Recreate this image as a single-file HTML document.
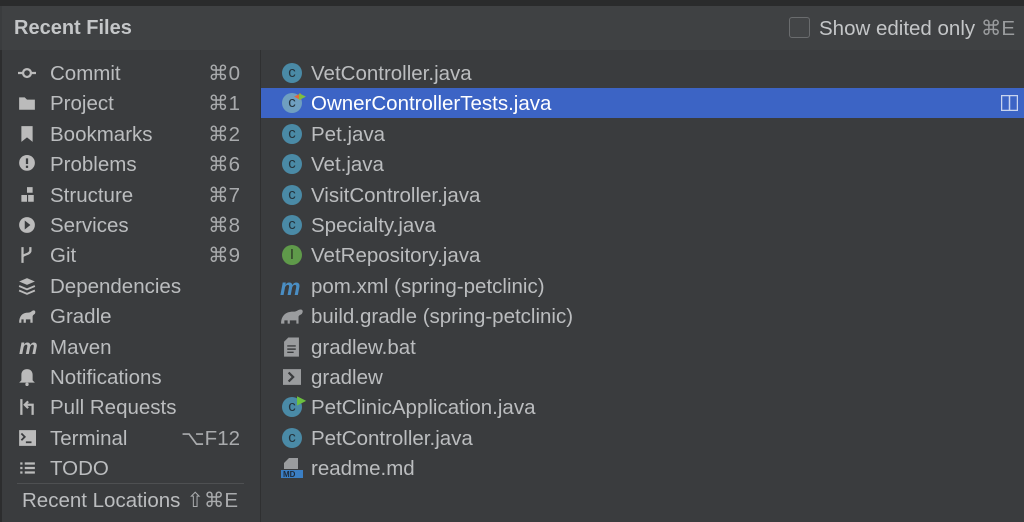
<html><head><style>
body{margin:0;width:1024px;height:522px;background:#3a3c3e;font-family:"Liberation Sans",sans-serif;overflow:hidden;position:relative;color:#bbbdbf}
.top{position:absolute;left:0;top:0;width:1024px;height:6px;background:#2a2b2c}
.hdr{position:absolute;left:2px;top:6px;width:1022px;height:44px;background:#3f4143}
.hdr .t{position:absolute;left:12px;top:11px;font-size:20px;font-weight:bold;color:#c4c6c8}
.cb{position:absolute;left:787px;top:11px;width:19px;height:19px;border:1px solid #6a6c6e;border-radius:3px;background:#434547}
.se{position:absolute;left:817px;top:10px;font-size:20.5px;color:#c4c6c8}
.se span{color:#9a9c9e}
.lb{position:absolute;left:0;top:50px;width:2px;height:472px;background:#2c2d2e}
.div{position:absolute;left:260px;top:50px;width:1px;height:472px;background:#2f3031}
.row{position:absolute;height:30px;line-height:32px;font-size:20.5px;white-space:nowrap}
.l{left:18px;width:222px}
.l .k{position:absolute;right:0;top:0;color:#a9abad}
.l .tx{position:absolute;left:32px}
.ic{position:absolute;top:6px;width:18px;height:18px}
.r .tx{position:absolute;left:50px}
.sel{position:absolute;left:261px;top:88px;width:763px;height:30px;background:#3c64c5}
.c{position:absolute;left:21px;top:5px;width:20px;height:20px;border-radius:50%;background:#4a8aa6;color:#24333c;font-size:15px;line-height:19px;text-align:center}
.sep{position:absolute;left:17px;top:483px;width:227px;height:1px;background:#4e5052}
</style></head><body>
<div class="top"></div>
<div class="hdr"><div class="t">Recent Files</div><div class="cb"></div><div class="se">Show edited only <span>⌘E</span></div></div>
<div class="lb"></div><div class="div"></div>
<div class="sel"></div>
<svg style="position:absolute;left:1001px;top:95px" width="17" height="16"><rect x="0.5" y="0.5" width="16" height="15" fill="none" stroke="#c8d4ee" stroke-width="1.5"/><line x1="8.5" y1="0" x2="8.5" y2="16" stroke="#c8d4ee" stroke-width="1.5"/></svg>

<div class="row l" style="top:58px"><svg class="ic" viewBox="0 0 16 16"><circle cx="8" cy="8" r="3.5" fill="none" stroke="#bbb" stroke-width="2"/><rect x="0" y="7" width="4" height="2" fill="#bbb"/><rect x="12" y="7" width="4" height="2" fill="#bbb"/></svg><span class="tx">Commit</span><span class="k">⌘0</span></div>
<div class="row l" style="top:88px"><svg class="ic" viewBox="0 0 16 16"><path d="M1 3h5l2 2h7v9H1z" fill="#bbb"/></svg><span class="tx">Project</span><span class="k">⌘1</span></div>
<div class="row l" style="top:119px"><svg class="ic" viewBox="0 0 16 16"><path d="M3 1h10v14l-5-4-5 4z" fill="#bbb"/></svg><span class="tx">Bookmarks</span><span class="k">⌘2</span></div>
<div class="row l" style="top:149px"><svg class="ic" viewBox="0 0 16 16"><circle cx="8" cy="7" r="7" fill="#bbb"/><rect x="7" y="3" width="2" height="5" fill="#3a3c3e"/><rect x="7" y="9.5" width="2" height="2" fill="#3a3c3e"/></svg><span class="tx">Problems</span><span class="k">⌘6</span></div>
<div class="row l" style="top:180px"><svg class="ic" viewBox="0 0 16 16"><rect x="8" y="1" width="5" height="5" fill="#bbb"/><rect x="3" y="8" width="5" height="6" fill="#bbb"/><rect x="9" y="8" width="5" height="6" fill="#bbb"/></svg><span class="tx">Structure</span><span class="k">⌘7</span></div>
<div class="row l" style="top:210px"><svg class="ic" viewBox="0 0 16 16"><circle cx="8" cy="8" r="7" fill="#bbb"/><path d="M6 4l5 4-5 4z" fill="#3a3c3e"/></svg><span class="tx">Services</span><span class="k">⌘8</span></div>
<div class="row l" style="top:240px"><svg class="ic" viewBox="0 0 16 16"><path d="M4 1v14M4 10c0-3 7-2 7-6M11 1v4" stroke="#bbb" stroke-width="2" fill="none"/></svg><span class="tx">Git</span><span class="k">⌘9</span></div>
<div class="row l" style="top:271px"><svg class="ic" viewBox="0 0 16 16"><path d="M8 1l7 3-7 3-7-3z" fill="#bbb"/><path d="M1 8l7 3 7-3M1 12l7 3 7-3" stroke="#bbb" stroke-width="1.6" fill="none"/></svg><span class="tx">Dependencies</span></div>
<div class="row l" style="top:301px"><svg class="ic" viewBox="0 0 16 16"><path d="M1 14c0-6 3-9 8-9 3 0 3-2 5-2 1 0 2 1 1 3-1 1-2 1-2 3v5h-2v-3H7v3H5v-3H3v3z" fill="#bbb"/></svg><span class="tx">Gradle</span></div>
<div class="row l" style="top:332px"><span style="position:absolute;left:1px;font-style:italic;font-weight:bold;color:#bbb;font-size:21px">m</span><span class="tx">Maven</span></div>
<div class="row l" style="top:362px"><svg class="ic" viewBox="0 0 16 16"><path d="M8 1c3 0 5 2 5 5v5l2 2H1l2-2V6c0-3 2-5 5-5z" fill="#bbb"/><circle cx="8" cy="14.5" r="1.5" fill="#bbb"/></svg><span class="tx">Notifications</span></div>
<div class="row l" style="top:392px"><svg class="ic" viewBox="0 0 16 16"><rect x="2" y="1" width="2" height="14" fill="#bbb"/><path d="M13 15V6H7M9 3L6 6l3 3" stroke="#bbb" stroke-width="2" fill="none"/></svg><span class="tx">Pull Requests</span></div>
<div class="row l" style="top:423px"><svg class="ic" viewBox="0 0 16 16"><rect x="1" y="1" width="15" height="14" fill="#bbb"/><path d="M3 4l3 3-3 3" stroke="#3a3c3e" stroke-width="1.6" fill="none"/><rect x="7" y="11" width="5" height="1.6" fill="#3a3c3e"/></svg><span class="tx">Terminal</span><span class="k">⌥F12</span></div>
<div class="row l" style="top:453px"><svg class="ic" viewBox="0 0 16 16" fill="#bbb"><rect x="2" y="3" width="2" height="2"/><rect x="6" y="3" width="9" height="2"/><rect x="2" y="7" width="2" height="2"/><rect x="6" y="7" width="9" height="2"/><rect x="2" y="11" width="2" height="2"/><rect x="6" y="11" width="9" height="2"/></svg><span class="tx">TODO</span></div>
<div class="sep"></div>
<div class="row" style="left:22px;top:485px;width:216px">Recent Locations<span style="position:absolute;right:0;color:#a9abad">⇧⌘E</span></div>

<div class="row r" style="left:261px;top:58px"><div class="c">c</div><span class="tx">VetController.java</span></div>
<div class="row r" style="left:261px;top:88px;color:#fff"><div class="c" style="background:#6f9fc0">c</div><span style="position:absolute;left:33px;top:-8px;color:#e06c3c;font-size:9px">◀</span><span style="position:absolute;left:38px;top:-8px;color:#7fbf3f;font-size:9px">▶</span><span class="tx">OwnerControllerTests.java</span></div>
<div class="row r" style="left:261px;top:119px"><div class="c">c</div><span class="tx">Pet.java</span></div>
<div class="row r" style="left:261px;top:149px"><div class="c">c</div><span class="tx">Vet.java</span></div>
<div class="row r" style="left:261px;top:180px"><div class="c">c</div><span class="tx">VisitController.java</span></div>
<div class="row r" style="left:261px;top:210px"><div class="c">c</div><span class="tx">Specialty.java</span></div>
<div class="row r" style="left:261px;top:240px"><div class="c" style="background:#5f9a4a;color:#2d3a26">I</div><span class="tx">VetRepository.java</span></div>
<div class="row r" style="left:261px;top:271px"><span style="position:absolute;left:19px;font-style:italic;font-weight:bold;color:#4a8ec4;font-size:23px">m</span><span class="tx">pom.xml (spring-petclinic)</span></div>
<div class="row r" style="left:261px;top:301px"><svg class="ic" style="left:19px;width:24px" viewBox="0 0 22 16"><path d="M1 15c0-7 4-11 11-11 4 0 4-2 7-2 1 0 3 1 1 4-1 1-3 1-3 3v6h-2v-3H9v3H7v-3H4v3z" fill="#9a9c9e"/></svg><span class="tx">build.gradle (spring-petclinic)</span></div>
<div class="row r" style="left:261px;top:332px"><svg class="ic" style="left:22px;top:4px;width:17px;height:22px" viewBox="0 0 16 20"><path d="M5 1h10v18H1V5z" fill="#9a9c9e"/><path d="M4 9h8M4 12h8M4 15h6" stroke="#3a3c3e" stroke-width="1.4"/></svg><span class="tx">gradlew.bat</span></div>
<div class="row r" style="left:261px;top:362px"><svg class="ic" style="left:22px" viewBox="0 0 16 16"><rect x="0" y="1" width="16" height="14" fill="#9a9c9e"/><path d="M5 4l4 4-4 4" stroke="#3a3c3e" stroke-width="2" fill="none"/></svg><span class="tx">gradlew</span></div>
<div class="row r" style="left:261px;top:392px"><div class="c">c</div><span style="position:absolute;left:36px;top:-8px;color:#6cbf3f;font-size:12px">▶</span><span class="tx">PetClinicApplication.java</span></div>
<div class="row r" style="left:261px;top:423px"><div class="c">c</div><span class="tx">PetController.java</span></div>
<div class="row r" style="left:261px;top:453px"><svg class="ic" style="left:20px;top:4px;width:22px;height:22px" viewBox="0 0 22 22"><path d="M8 1h9v11H3V6z" fill="#9a9c9e"/><rect x="0" y="13" width="22" height="8" fill="#3b7fc4"/><text x="2" y="20" font-size="8" font-family="Liberation Sans" font-weight="bold" fill="#1e2a3a">MD</text></svg><span class="tx">readme.md</span></div>
</body></html>
